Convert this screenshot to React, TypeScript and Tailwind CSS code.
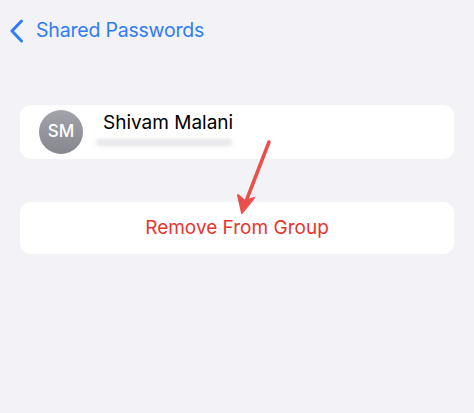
// Group member detail sheet, iOS settings style
function Avatar({ initials }: { initials: string }) {
  return (
    <div className="flex h-[44px] w-[44px] shrink-0 items-center justify-center rounded-full bg-gradient-to-b from-[#a3a4ab] to-[#85868e] text-[17px] font-medium text-white">
      {initials}
    </div>
  );
}

function BackChevron() {
  return (
    <svg width="16" height="26" viewBox="0 0 16 26" className="shrink-0">
      <polyline
        points="12.5,3 3,13 12.5,23"
        fill="none"
        stroke="#2f7cf6"
        strokeWidth="3"
        strokeLinecap="round"
        strokeLinejoin="round"
      />
    </svg>
  );
}

function PointerArrow() {
  return (
    <svg
      className="pointer-events-none absolute left-[236px] top-[136px]"
      width="40"
      height="82"
      viewBox="0 0 40 82"
    >
      <line x1="33" y1="6" x2="9" y2="68" stroke="#e9504b" strokeWidth="3.5" strokeLinecap="round" />
      <path d="M6 77 L2 59 L9 65 L18 62 Z" fill="#e9504b" stroke="#e9504b" strokeWidth="2" strokeLinejoin="round" />
    </svg>
  );
}

export default function App() {
  return (
    <div className="relative h-[413px] w-[474px] overflow-hidden bg-[#f2f2f7] font-['Inter',sans-serif]">
      <header className="flex h-[60px] items-center pl-[9px] pt-[1px]">
        <BackChevron />
        <span className="ml-[11px] text-[19.5px] tracking-[-0.2px] text-[#2f7cf6]">Shared Passwords</span>
      </header>

      <section className="mx-[20px] mt-[45px] flex h-[54px] items-center rounded-[11px] bg-white pl-[19px]">
        <Avatar initials="SM" />
        <div className="ml-[20px] flex flex-col">
          <span className="mt-[-8px] text-[19px] leading-[24px] text-black">Shivam Malani</span>
          <span className="ml-[-7px] mt-[4px] h-[7px] w-[136px] rounded-full bg-[#e6e6ea] blur-[2px]" />
        </div>
      </section>

      <section className="mx-[20px] mt-[43px] flex h-[52px] items-center justify-center rounded-[11px] bg-white">
        <button className="text-[19px] text-[#e8352e]">Remove From Group</button>
      </section>

      <PointerArrow />
    </div>
  );
}
